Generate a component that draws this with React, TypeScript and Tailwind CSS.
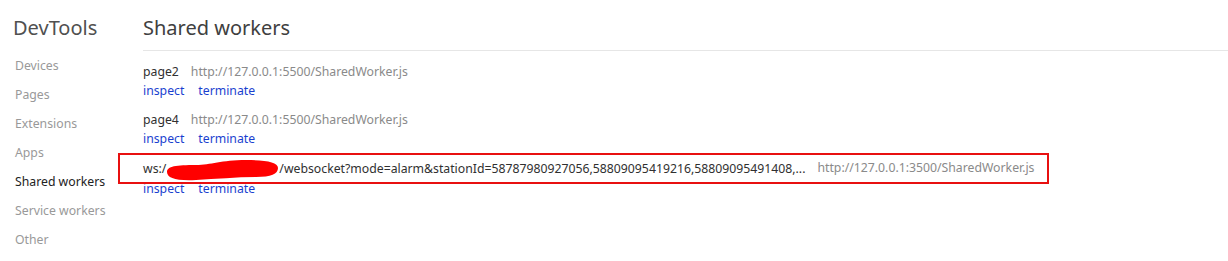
import React from "react";

const NAV = ["Devices", "Pages", "Extensions", "Apps", "Shared workers", "Service workers", "Other"];

const font = { fontFamily: '"Segoe UI", "Noto Sans", sans-serif' };

function Actions() {
  return (
    <div className="flex gap-[14px] text-[#1a3fcf] leading-[19px]">
      <span>inspect</span>
      <span>terminate</span>
    </div>
  );
}

function Worker({ name, url }: { name: React.ReactNode; url: string }) {
  return (
    <div className="mb-[11px]">
      <div className="flex gap-[12px] leading-[18px]">
        <span className="text-[#303030]">{name}</span>
        <span className="text-[#8a8a8a]">{url}</span>
      </div>
      <Actions />
    </div>
  );
}

function Scribble() {
  return (
    <svg width="113" height="22" viewBox="0 0 113 22" className="-mb-[2px] inline-block">
      <path
        d="M1,13 C1,7 10,6 30,6 C45,6 55,1 80,1 C100,1 112,3 112,9 C112,15 105,18 90,18 C70,18 50,20 30,21 C10,22 1,19 1,13 Z"
        fill="#ff0000"
      />
    </svg>
  );
}

export default function App() {
  return (
    <div className="flex h-[261px] w-[1228px] bg-white text-[12.25px]" style={font}>
      <aside className="w-[143px] shrink-0 pl-[13px] pt-[15px]">
        <div className="text-[20px] leading-[26px] text-[#505050] mb-[16px]">DevTools</div>
        <ul>
          {NAV.map((n) => (
            <li key={n} className={`h-[29px] pl-[2px] leading-[18px] ${n === "Shared workers" ? "text-[#222]" : "text-[#999]"}`}>
              {n}
            </li>
          ))}
        </ul>
      </aside>
      <main className="flex-1 pt-[15px]">
        <h1 className="text-[20px] leading-[26px] text-[#404040] pb-[9px] border-b border-[#e6e6e6]">Shared workers</h1>
        <div className="pt-[12px]">
          <Worker name="page2" url="http://127.0.0.1:5500/SharedWorker.js" />
          <Worker name="page4" url="http://127.0.0.1:5500/SharedWorker.js" />
          <div className="relative">
            <Worker
              name={
                <span className="inline-flex items-center">
                  ws:/
                  <Scribble />
                  /websocket?mode=alarm&amp;stationId=58787980927056,58809095419216,58809095491408,...
                </span>
              }
              url="http://127.0.0.1:3500/SharedWorker.js"
            />
            <div className="absolute left-[-25px] top-[-6px] h-[31px] w-[931px] border-2 border-[#e81010] pointer-events-none" />
          </div>
        </div>
      </main>
    </div>
  );
}
